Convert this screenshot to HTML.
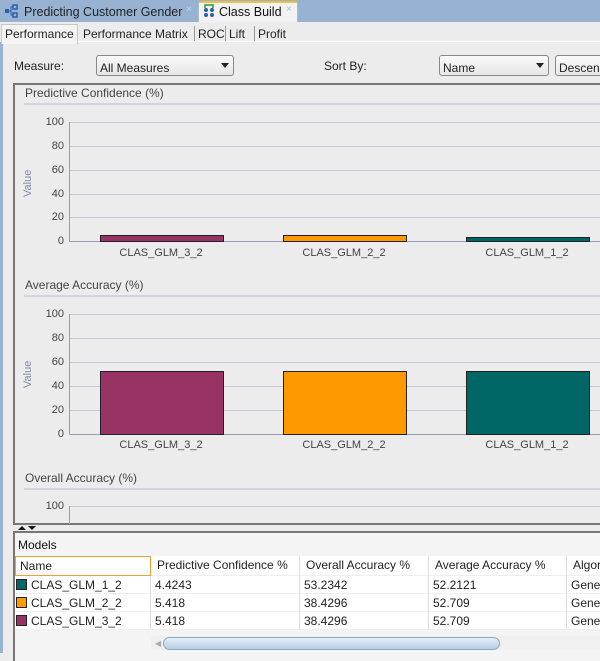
<!DOCTYPE html>
<html><head><meta charset="utf-8">
<style>
*{margin:0;padding:0;box-sizing:border-box}
body{width:600px;height:653px;overflow:hidden;background:#ececec;font-family:"Liberation Sans",sans-serif;font-size:12px;color:#222;position:relative}
.a{position:absolute;white-space:nowrap}
.tick{position:absolute;font-size:11px;color:#444;text-align:right;width:30px}
.grid{position:absolute;height:1px;background:#c8c8d8}
.lbl{position:absolute;font-size:11px;color:#444;width:160px;text-align:center}
.bar{position:absolute;border:1px solid #222}
.ttl{position:absolute;font-size:12px;color:#444}
.cell{position:absolute;height:18px;line-height:18px;padding-left:4px;font-size:12px;border-right:1px solid #ddd;border-bottom:1px solid #eee;white-space:nowrap;overflow:hidden}
</style></head><body>
<div class="a" style="left:0;top:0;width:600px;height:22px;background:#98b3d1"></div>
<div class="a" style="left:0;top:0;width:3px;height:653px;background:#98b3d1"></div>
<svg class="a" style="left:4px;top:4px" width="16" height="14"><rect x="1" y="5" width="4" height="4" fill="#2a5fb0"/><rect x="9" y="1" width="4" height="4" fill="none" stroke="#2a5fb0" stroke-width="1.5"/><rect x="9" y="9" width="4" height="4" fill="none" stroke="#2a5fb0" stroke-width="1.5"/><path d="M5 7H7V3H9M7 7V11H9" stroke="#2a5fb0" fill="none"/></svg>
<div class="a" style="left:24px;top:5px;font-size:12.5px;color:#222">Predicting Customer Gender</div>
<div class="a" style="left:186px;top:4px;font-size:10px;color:#c8d4e4">×</div>
<div class="a" style="left:198px;top:1px;width:100px;height:22px;background:#f2f2f2;border:1px solid #aabbd0;border-bottom:none;border-radius:3px 3px 0 0"></div>
<div class="a" style="left:199px;top:1px;width:98px;height:2px;background:#f0c040"></div>
<svg class="a" style="left:202px;top:3px" width="14" height="16"><path d="M3 5V2H11V5" stroke="#2a9a2a" fill="none" stroke-width="1.5"/><circle cx="4" cy="7" r="2" fill="#2a5fb0"/><circle cx="10" cy="7" r="2" fill="#2a5fb0"/><circle cx="4" cy="12" r="2" fill="#2a5fb0"/><circle cx="10" cy="12" r="2" fill="#2a5fb0"/></svg>
<div class="a" style="left:219px;top:5px;font-size:12.5px;color:#111">Class Build</div>
<div class="a" style="left:286px;top:4px;font-size:10px;color:#bbb">×</div>
<div class="a" style="left:0;top:22px;width:600px;height:20px;background:#ececec;border-bottom:1px solid #fff"></div>
<div class="a" style="left:1px;top:24px;width:77px;height:20px;background:#f4f4f4;border:1px solid #c8c8c8;border-bottom:none"></div>
<div class="a" style="left:5px;top:27px">Performance</div>
<div class="a" style="left:83px;top:27px">Performance Matrix</div>
<div class="a" style="left:194px;top:26px;width:1px;height:15px;background:#999"></div>
<div class="a" style="left:198px;top:27px">ROC</div>
<div class="a" style="left:225px;top:26px;width:1px;height:15px;background:#999"></div>
<div class="a" style="left:229px;top:27px">Lift</div>
<div class="a" style="left:254px;top:26px;width:1px;height:15px;background:#999"></div>
<div class="a" style="left:258px;top:27px">Profit</div>
<div class="a" style="left:14px;top:59px">Measure:</div>
<div class="a" style="left:96px;top:55px;width:138px;height:21px;border:1px solid #888;border-radius:3px;background:linear-gradient(#fafafa,#e6e6e6);padding:5px 0 0 3px">All Measures</div>
<div class="a" style="left:221px;top:63px;border-left:4px solid transparent;border-right:4px solid transparent;border-top:5px solid #222"></div>
<div class="a" style="left:324px;top:59px">Sort By:</div>
<div class="a" style="left:439px;top:55px;width:110px;height:21px;border:1px solid #888;border-radius:3px;background:linear-gradient(#fafafa,#e6e6e6);padding:5px 0 0 3px">Name</div>
<div class="a" style="left:536px;top:63px;border-left:4px solid transparent;border-right:4px solid transparent;border-top:5px solid #222"></div>
<div class="a" style="left:555px;top:55px;width:60px;height:21px;border:1px solid #888;border-radius:3px;background:linear-gradient(#fafafa,#e6e6e6);padding:5px 0 0 3px">Descending</div>
<div class="a" style="left:13px;top:83px;width:600px;height:442px;border:2px solid #777;border-right:none"></div>

<div class="ttl" style="left:25px;top:86px">Predictive Confidence (%)</div>
<div class="a" style="left:24px;top:103px;width:580px;height:2px;background:#d4d4dc"></div>
<div class="a" style="left:22px;top:197px;font-size:11px;color:#8888a8;transform:rotate(-90deg);transform-origin:left top">Value</div>
<div class="tick" style="left:34px;top:116px">100</div><div class="grid" style="left:69px;top:122px;width:531px"></div>
<div class="tick" style="left:34px;top:140px">80</div><div class="grid" style="left:69px;top:146px;width:531px"></div>
<div class="tick" style="left:34px;top:164px">60</div><div class="grid" style="left:69px;top:170px;width:531px"></div>
<div class="tick" style="left:34px;top:188px">40</div><div class="grid" style="left:69px;top:194px;width:531px"></div>
<div class="tick" style="left:34px;top:211px">20</div><div class="grid" style="left:69px;top:217px;width:531px"></div>
<div class="tick" style="left:34px;top:235px">0</div>
<div class="a" style="left:69px;top:122px;width:1px;height:120px;background:#9a9ab8"></div>
<div class="a" style="left:69px;top:241px;width:531px;height:1px;background:#9a9ab8"></div>
<div class="bar" style="left:100px;top:235px;width:124px;height:7px;background:#993366"></div>
<div class="bar" style="left:283px;top:235px;width:124px;height:7px;background:#ff9900"></div>
<div class="bar" style="left:466px;top:237px;width:124px;height:5px;background:#006666"></div>
<div class="lbl" style="left:81px;top:247px">CLAS_GLM_3_2</div>
<div class="lbl" style="left:264px;top:247px">CLAS_GLM_2_2</div>
<div class="lbl" style="left:447px;top:247px">CLAS_GLM_1_2</div>

<div class="ttl" style="left:25px;top:278px">Average Accuracy (%)</div>
<div class="a" style="left:24px;top:295px;width:580px;height:2px;background:#d4d4dc"></div>
<div class="a" style="left:22px;top:388px;font-size:11px;color:#8888a8;transform:rotate(-90deg);transform-origin:left top">Value</div>
<div class="tick" style="left:34px;top:308px">100</div><div class="grid" style="left:69px;top:314px;width:531px"></div>
<div class="tick" style="left:34px;top:332px">80</div><div class="grid" style="left:69px;top:338px;width:531px"></div>
<div class="tick" style="left:34px;top:356px">60</div><div class="grid" style="left:69px;top:362px;width:531px"></div>
<div class="tick" style="left:34px;top:380px">40</div><div class="grid" style="left:69px;top:386px;width:531px"></div>
<div class="tick" style="left:34px;top:404px">20</div><div class="grid" style="left:69px;top:410px;width:531px"></div>
<div class="tick" style="left:34px;top:428px">0</div>
<div class="a" style="left:69px;top:314px;width:1px;height:121px;background:#9a9ab8"></div>
<div class="a" style="left:69px;top:434px;width:531px;height:1px;background:#9a9ab8"></div>
<div class="bar" style="left:100px;top:371px;width:124px;height:64px;background:#993366"></div>
<div class="bar" style="left:283px;top:371px;width:124px;height:64px;background:#ff9900"></div>
<div class="bar" style="left:466px;top:371px;width:124px;height:64px;background:#006666"></div>
<div class="lbl" style="left:81px;top:439px">CLAS_GLM_3_2</div>
<div class="lbl" style="left:264px;top:439px">CLAS_GLM_2_2</div>
<div class="lbl" style="left:447px;top:439px">CLAS_GLM_1_2</div>

<div class="ttl" style="left:25px;top:471px">Overall Accuracy (%)</div>
<div class="a" style="left:24px;top:488px;width:580px;height:2px;background:#d4d4dc"></div>
<div class="tick" style="left:34px;top:500px">100</div><div class="grid" style="left:69px;top:506px;width:531px"></div>
<div class="a" style="left:69px;top:506px;width:1px;height:18px;background:#9a9ab8"></div>

<div class="a" style="left:18px;top:526px;border-left:4px solid transparent;border-right:4px solid transparent;border-bottom:4px solid #111"></div>
<div class="a" style="left:28px;top:526px;border-left:4px solid transparent;border-right:4px solid transparent;border-top:4px solid #111"></div>

<div class="a" style="left:13px;top:531px;width:600px;height:130px;border:2px solid #777;border-right:none;border-bottom:none;background:#f4f4f4"></div>
<div class="a" style="left:18px;top:538px;color:#111">Models</div>
<div class="a" style="left:15px;top:556px;width:585px;height:20px;background:#fff"></div>
<div class="cell" style="left:15px;top:556px;width:136px;height:20px;line-height:18px;border:1px solid #f0a030">Name</div>
<div class="cell" style="left:151px;top:556px;width:149px;height:20px;line-height:18px;padding-left:6px">Predictive Confidence %</div>
<div class="cell" style="left:300px;top:556px;width:129px;height:20px;line-height:18px;padding-left:6px">Overall Accuracy %</div>
<div class="cell" style="left:429px;top:556px;width:138px;height:20px;line-height:18px;padding-left:6px">Average Accuracy %</div>
<div class="cell" style="left:567px;top:556px;width:40px;height:20px;line-height:18px;padding-left:6px">Algorithm</div>
<div class="a" style="left:15px;top:576px;width:585px;height:54px;background:#fff"></div>
<div class="a" style="left:16px;top:579px;width:11px;height:11px;background:#006666;border:1px solid #222"></div>
<div class="cell" style="left:15px;top:576px;width:136px;padding-left:16px">CLAS_GLM_1_2</div>
<div class="cell" style="left:151px;top:576px;width:149px">4.4243</div>
<div class="cell" style="left:300px;top:576px;width:129px">53.2342</div>
<div class="cell" style="left:429px;top:576px;width:138px">52.2121</div>
<div class="cell" style="left:567px;top:576px;width:40px">General</div>
<div class="a" style="left:16px;top:597px;width:11px;height:11px;background:#ff9900;border:1px solid #222"></div>
<div class="cell" style="left:15px;top:594px;width:136px;padding-left:16px">CLAS_GLM_2_2</div>
<div class="cell" style="left:151px;top:594px;width:149px">5.418</div>
<div class="cell" style="left:300px;top:594px;width:129px">38.4296</div>
<div class="cell" style="left:429px;top:594px;width:138px">52.709</div>
<div class="cell" style="left:567px;top:594px;width:40px">General</div>
<div class="a" style="left:16px;top:615px;width:11px;height:11px;background:#993366;border:1px solid #222"></div>
<div class="cell" style="left:15px;top:612px;width:136px;padding-left:16px">CLAS_GLM_3_2</div>
<div class="cell" style="left:151px;top:612px;width:149px">5.418</div>
<div class="cell" style="left:300px;top:612px;width:129px">38.4296</div>
<div class="cell" style="left:429px;top:612px;width:138px">52.709</div>
<div class="cell" style="left:567px;top:612px;width:40px">General</div>
<div class="a" style="left:151px;top:636px;width:449px;height:14px;background:#f0f0f0"></div>
<div class="a" style="left:155px;top:639px;font-size:8px;color:#aaa">◀</div>
<div class="a" style="left:163px;top:637px;width:337px;height:13px;border:1px solid #8aa8c8;border-radius:7px;background:linear-gradient(#e4eef8,#b8cde4)"></div>
</body></html>
